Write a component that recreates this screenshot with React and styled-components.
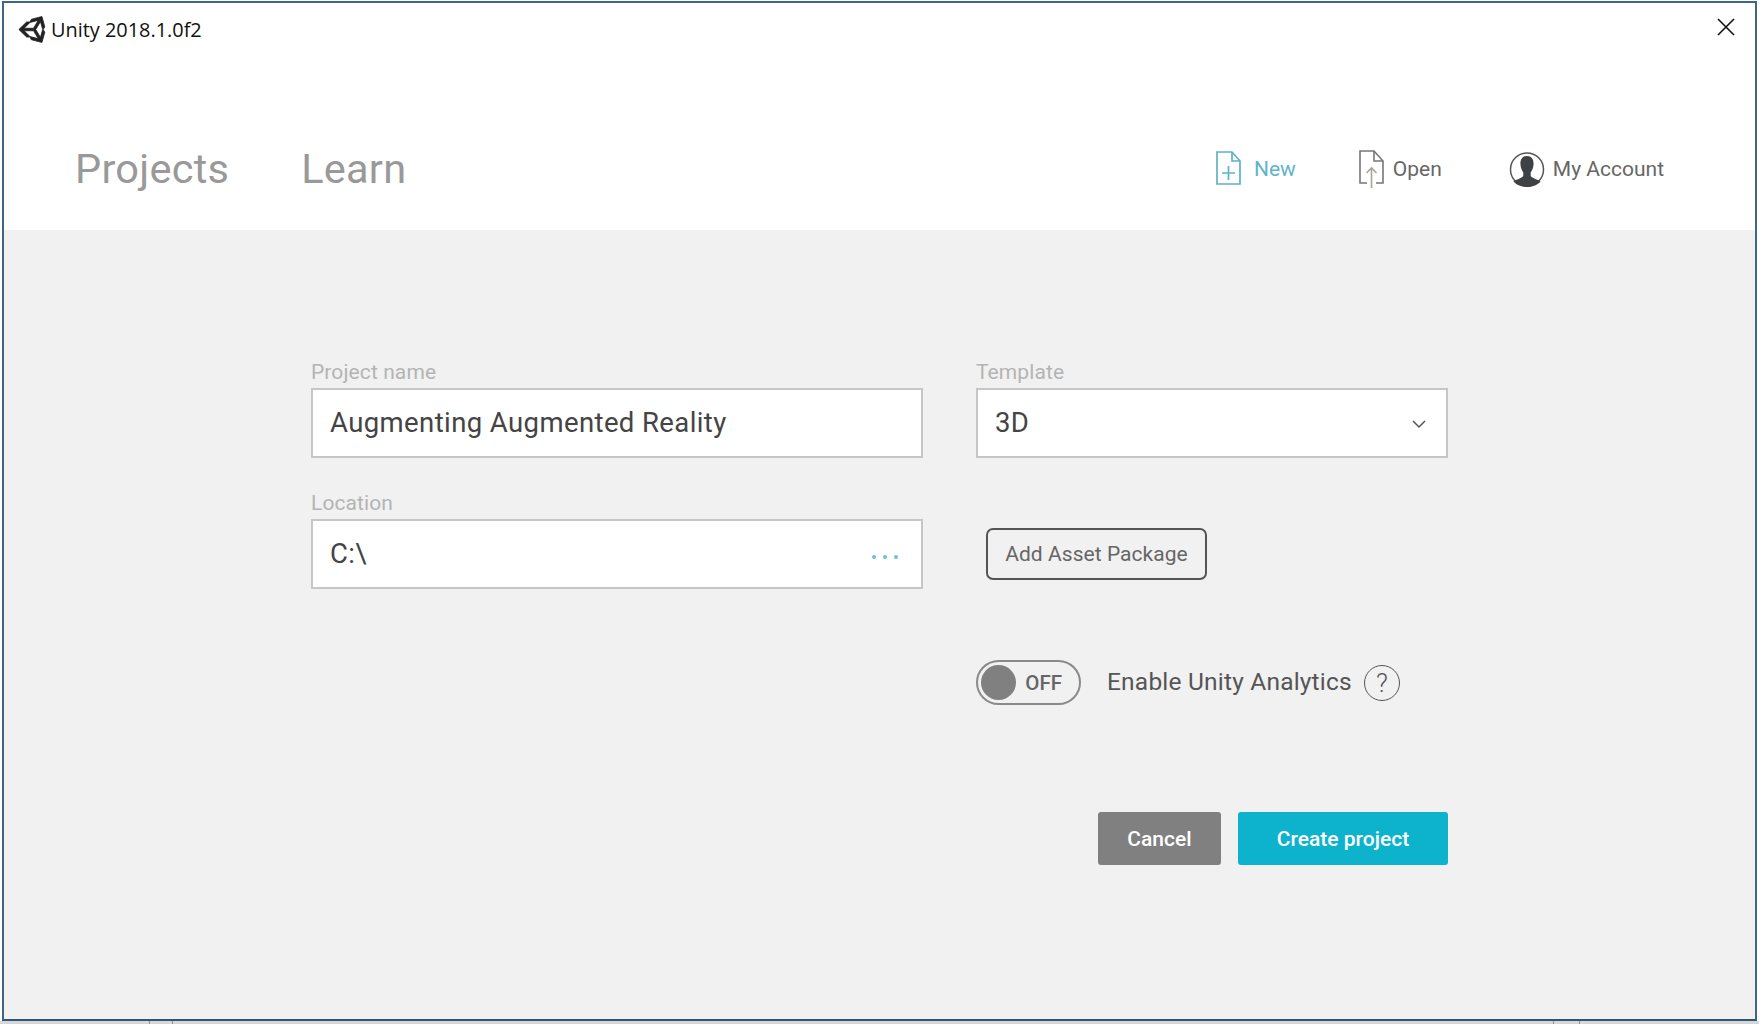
import styled, { createGlobalStyle } from 'styled-components';
import { FaUnity } from 'react-icons/fa';

const GlobalStyle = createGlobalStyle`
  html, body {
    margin: 0;
    padding: 0;
    background: #fff;
  }
  * {
    box-sizing: border-box;
  }
`;

const Page = styled.div`
  width: 1759px;
  height: 1024px;
  overflow: hidden;
  display: flex;
  flex-direction: column;
  font-family: Roboto, "Liberation Sans", sans-serif;
`;

const Window = styled.div`
  height: 1020px;
  margin: 1px 2px 0 2px;
  border: 2px solid #3f6783;
  border-bottom-color: #33556d;
  display: flex;
  flex-direction: column;
  background: #f1f1f1;
`;

const Desktop = styled.div`
  flex: 1;
  background: #d4d8da;
  display: flex;
  padding-left: 149px;
`;

const Tick = styled.span`
  width: 1px;
  background: #8b8f93;
  margin-right: ${(p) => p.$gap}px;
`;

const Header = styled.header`
  height: 227px;
  background: #fff;
  display: flex;
  flex-direction: column;
`;

const TitleBar = styled.div`
  height: 50px;
  padding: 2px 20px 0 14px;
  display: flex;
  align-items: center;
  justify-content: space-between;
`;

const AppName = styled.div`
  display: flex;
  align-items: center;
  gap: 2px;
  font-family: "Open Sans", sans-serif;
  font-size: 19.9px;
  color: #111;
`;

const CloseIcon = styled.svg`
  margin-bottom: 5px;
`;

const Nav = styled.nav`
  flex: 1;
  padding: 0 91px 0 71px;
  display: flex;
  align-items: center;
  justify-content: space-between;
  margin-top: 55px;
`;

const Tabs = styled.div`
  display: flex;
  gap: 72px;
  margin-bottom: 2px;
`;

const Tab = styled.div`
  font-size: 41.5px;
  letter-spacing: 0.25px;
  color: #999;
`;

const Actions = styled.div`
  display: flex;
  align-items: center;
`;

const Action = styled.div`
  display: flex;
  align-items: center;
  gap: ${(p) => p.$gap}px;
  margin-left: ${(p) => p.$left}px;
  font-size: 21px;
  color: ${(p) => p.$color || '#666'};
`;

const NewSvg = styled.svg`
  margin-bottom: 2px;
`;

const Main = styled.main`
  flex: 1;
  padding: 129px 0 0 307px;
  display: grid;
  grid-template-columns: 612px 472px;
  column-gap: 53px;
  align-items: start;
`;

const Column = styled.div`
  display: flex;
  flex-direction: column;
`;

const Field = styled.div`
  margin-bottom: ${(p) => p.$mb || 0}px;
`;

const Label = styled.div`
  height: 29px;
  line-height: 27px;
  font-size: 21px;
  letter-spacing: 0.1px;
  color: #b4b4b4;
`;

const Box = styled.div`
  height: 70px;
  padding: 0 18px 2px 17px;
  background: #fff;
  border: 2px solid #c6c6c6;
  display: flex;
  align-items: center;
  justify-content: space-between;
  font-size: 27.5px;
  letter-spacing: 0.4px;
  color: #444;
`;

const Chevron = styled.svg`
  margin: 3px 1px 0 0;
`;

const Dots = styled.div`
  display: flex;
  gap: 7px;
  margin: 7px 5px 0 0;
`;

const Dot = styled.span`
  width: 4px;
  height: 4px;
  border-radius: 50%;
  background: #6cc0d0;
`;

const OutlineButton = styled.div`
  width: 221px;
  height: 52px;
  margin: 70px 0 0 10px;
  border: 2px solid #555;
  border-radius: 7px;
  display: flex;
  align-items: center;
  justify-content: center;
  font-size: 21px;
  letter-spacing: 0.05px;
  color: #666;
`;

const AnalyticsRow = styled.div`
  height: 45px;
  margin-top: 80px;
  display: flex;
  align-items: center;
`;

const Toggle = styled.div`
  width: 105px;
  height: 45px;
  padding: 0 17px 0 3px;
  border: 2px solid #8a8a8a;
  border-radius: 23px;
  display: flex;
  align-items: center;
  justify-content: space-between;
  font-size: 20.5px;
  font-weight: 500;
  color: #666;
`;

const Knob = styled.span`
  width: 35px;
  height: 35px;
  border-radius: 50%;
  background: #808080;
`;

const AnalyticsLabel = styled.div`
  margin: 0 0 2px 26px;
  font-size: 24.5px;
  letter-spacing: 0.2px;
  color: #555;
`;

const Help = styled.div`
  width: 36px;
  height: 36px;
  margin-left: 12px;
  border: 1.5px solid #555;
  border-radius: 50%;
  display: flex;
  align-items: center;
  justify-content: center;
  font-size: 26px;
  font-weight: 300;
  color: #555;
`;

const ButtonRow = styled.div`
  margin-top: 107px;
  display: flex;
  justify-content: flex-end;
  gap: 17px;
`;

const Button = styled.div`
  width: ${(p) => p.$width}px;
  height: 53px;
  border-radius: 3px;
  background: ${(p) => p.$bg};
  display: flex;
  align-items: center;
  justify-content: center;
  font-size: 21px;
  font-weight: 500;
  color: #fff;
`;

const NewIcon = () => (
  <NewSvg width="27" height="36" viewBox="0 0 27 36" fill="none" stroke="#5fb2c7" strokeWidth="1.7">
    <path d="M2 2h15l8 9v23H2z" />
    <path d="M17 2v9h8" />
    <path d="M7 23h13M13.500 16v14" />
  </NewSvg>
);

const OpenIcon = () => (
  <svg width="27" height="40" viewBox="0 0 27 40" fill="none" stroke="#777" strokeWidth="1.6">
    <path d="M9 34H2V2h14l9 10v22h-7" />
    <path d="M16 2v10h9" />
    <path d="M13.500 39V19M8.500 24l5-5 5 5" stroke="#a9a59b" />
  </svg>
);

const AccountIcon = () => (
  <svg width="36" height="37" viewBox="0 0 36 37">
    <circle cx="18" cy="18.500" r="16.500" fill="none" stroke="#555" strokeWidth="1.5" />
    <path
      d="M18 5c-5 0-7 4-6.500 9 .3 3 1.500 6 2.800 7.500V25C12 28 6 28.500 4.500 30.500 8 34.500 13 36 18 36s10-1.500 13.500-5.500C30 28.500 24 28 21.700 25v-3.500c1.300-1.500 2.500-4.500 2.800-7.500C25 9 23 5 18 5z"
      fill="#3f4245"
    />
  </svg>
);

export default function App() {
  return (
    <Page>
      <GlobalStyle />
      <Window>
        <Header>
          <TitleBar>
            <AppName>
              <FaUnity size={31} color="#222" stroke="#222" strokeWidth={14} />
              Unity 2018.1.0f2
            </AppName>
            <CloseIcon width="18" height="18" viewBox="0 0 18 18" stroke="#111" strokeWidth="1.6">
              <path d="M1 1l16 16M17 1L1 17" />
            </CloseIcon>
          </TitleBar>
          <Nav>
            <Tabs>
              <Tab>Projects</Tab>
              <Tab>Learn</Tab>
            </Tabs>
            <Actions>
              <Action $gap={12} $color="#5fb4c9">
                <NewIcon />
                New
              </Action>
              <Action $gap={8} $left={62}>
                <OpenIcon />
                Open
              </Action>
              <Action $gap={8} $left={67}>
                <AccountIcon />
                My Account
              </Action>
            </Actions>
          </Nav>
        </Header>

        <Main>
          <Column>
            <Field $mb={32}>
              <Label>Project name</Label>
              <Box>Augmenting Augmented Reality</Box>
            </Field>
            <Field>
              <Label>Location</Label>
              <Box>
                C:\
                <Dots>
                  <Dot />
                  <Dot />
                  <Dot />
                </Dots>
              </Box>
            </Field>
          </Column>

          <Column>
            <Field>
              <Label>Template</Label>
              <Box>
                3D
                <Chevron width="16" height="10" viewBox="0 0 16 10" fill="none" stroke="#555" strokeWidth="1.5">
                  <path d="M2 2l6 6 6-6" />
                </Chevron>
              </Box>
            </Field>
            <OutlineButton>Add Asset Package</OutlineButton>
            <AnalyticsRow>
              <Toggle>
                <Knob />
                OFF
              </Toggle>
              <AnalyticsLabel>Enable Unity Analytics</AnalyticsLabel>
              <Help>?</Help>
            </AnalyticsRow>
            <ButtonRow>
              <Button $width={123} $bg="#808080">Cancel</Button>
              <Button $width={210} $bg="#0db3cc">Create project</Button>
            </ButtonRow>
          </Column>
        </Main>
      </Window>
      <Desktop>
        <Tick $gap={22} />
        <Tick $gap={1380} />
        <Tick $gap={25} />
        <Tick $gap={0} />
      </Desktop>
    </Page>
  );
}
